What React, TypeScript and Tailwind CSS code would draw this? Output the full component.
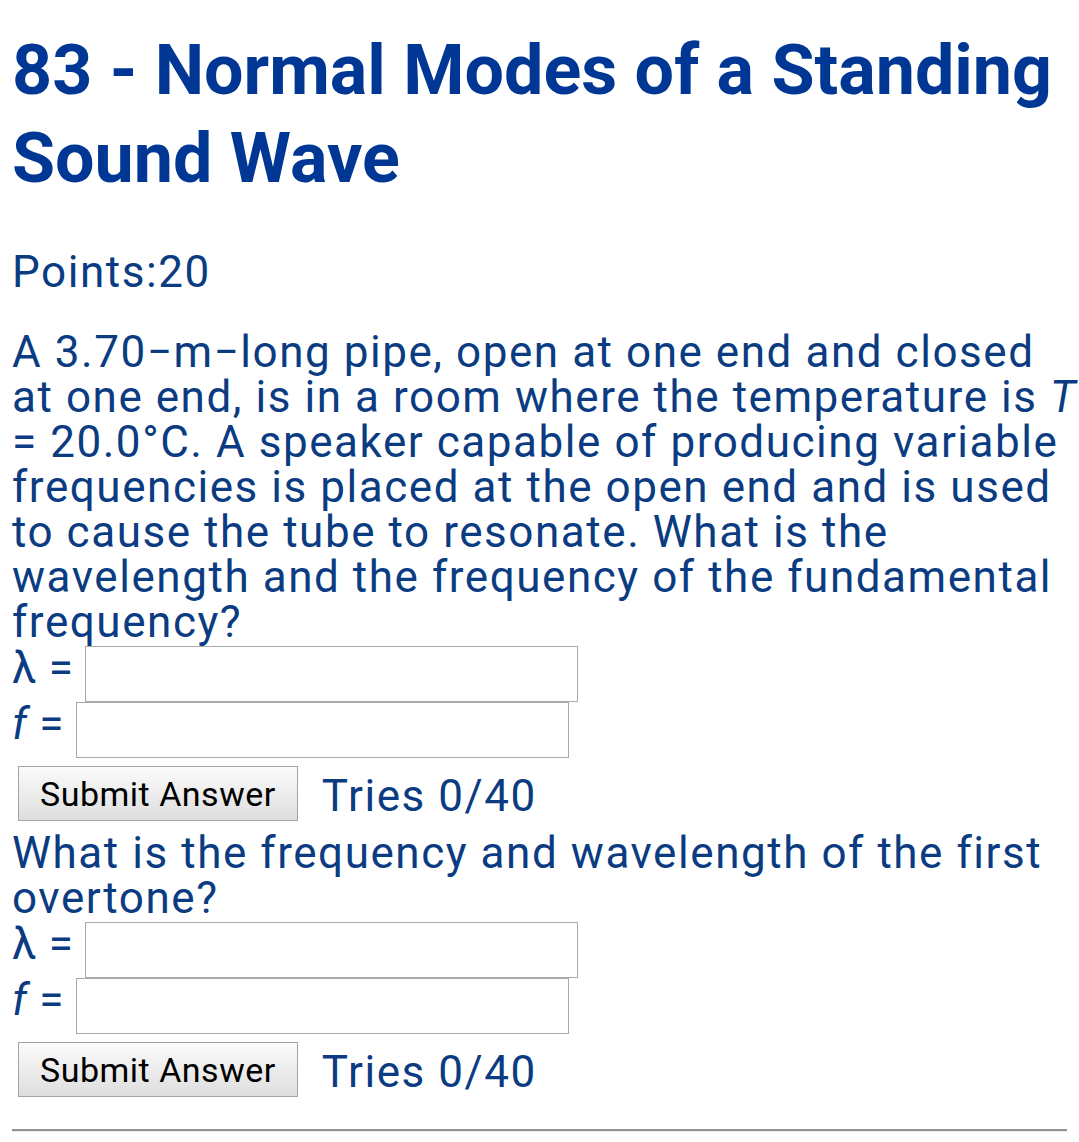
function AnswerRow({ label, italic }: { label: string; italic?: boolean }) {
  return (
    <div className="flex items-start">
      <span className="whitespace-pre tracking-[0.7px]">
        {italic ? <i>{label}</i> : label} ={' '}
      </span>
      <input type="text" className="h-[56px] w-[493px] border border-[#a9a9a9] bg-white outline-none" />
    </div>
  )
}

function SubmitRow() {
  return (
    <div className="mt-[8px] flex items-start">
      <button className="ml-[6px] h-[55px] border border-[#a3a3a3] bg-gradient-to-b from-[#fbfbfb] to-[#dedede] px-[21px] text-[34px] leading-none tracking-[0.5px] text-black">
        Submit Answer
      </button>
      <span className="ml-[24px] mt-[8px]">Tries 0/40</span>
    </div>
  )
}

export default function App() {
  return (
    <div
      className="min-h-screen bg-white pl-[12px] pt-[26px] text-[#0b3c82]"
      style={{ fontFamily: 'Roboto, "Noto Sans", sans-serif' }}
    >
      <h1 className="text-[70px] font-bold leading-[88px] text-[#003794]">
        83 - Normal Modes of a Standing Sound Wave
      </h1>
      <div className="text-[44px] leading-[45px] tracking-[1.55px]">
        <p className="mt-[48px]">Points:20</p>

        <p className="mb-[1px] mt-[35px]">
          A 3.70−m−long pipe, open at one end and closed at one end, is in a room where the temperature is{' '}
          <i className="tracking-normal">T</i> = 20.0°C. A speaker capable of producing variable frequencies is placed
          at the open end and is used to cause the tube to resonate. What is the wavelength and the frequency of the
          fundamental frequency?
        </p>
        <AnswerRow label="λ" />
        <AnswerRow label="f" italic />
        <SubmitRow />

        <p className="mb-[1px] mt-[10px]">What is the frequency and wavelength of the first overtone?</p>
        <AnswerRow label="λ" />
        <AnswerRow label="f" italic />
        <SubmitRow />
      </div>
      <hr className="mr-[12px] mt-[32px] border-t-2 border-b border-t-[#909090] border-b-[#ececec]" />
    </div>
  )
}
